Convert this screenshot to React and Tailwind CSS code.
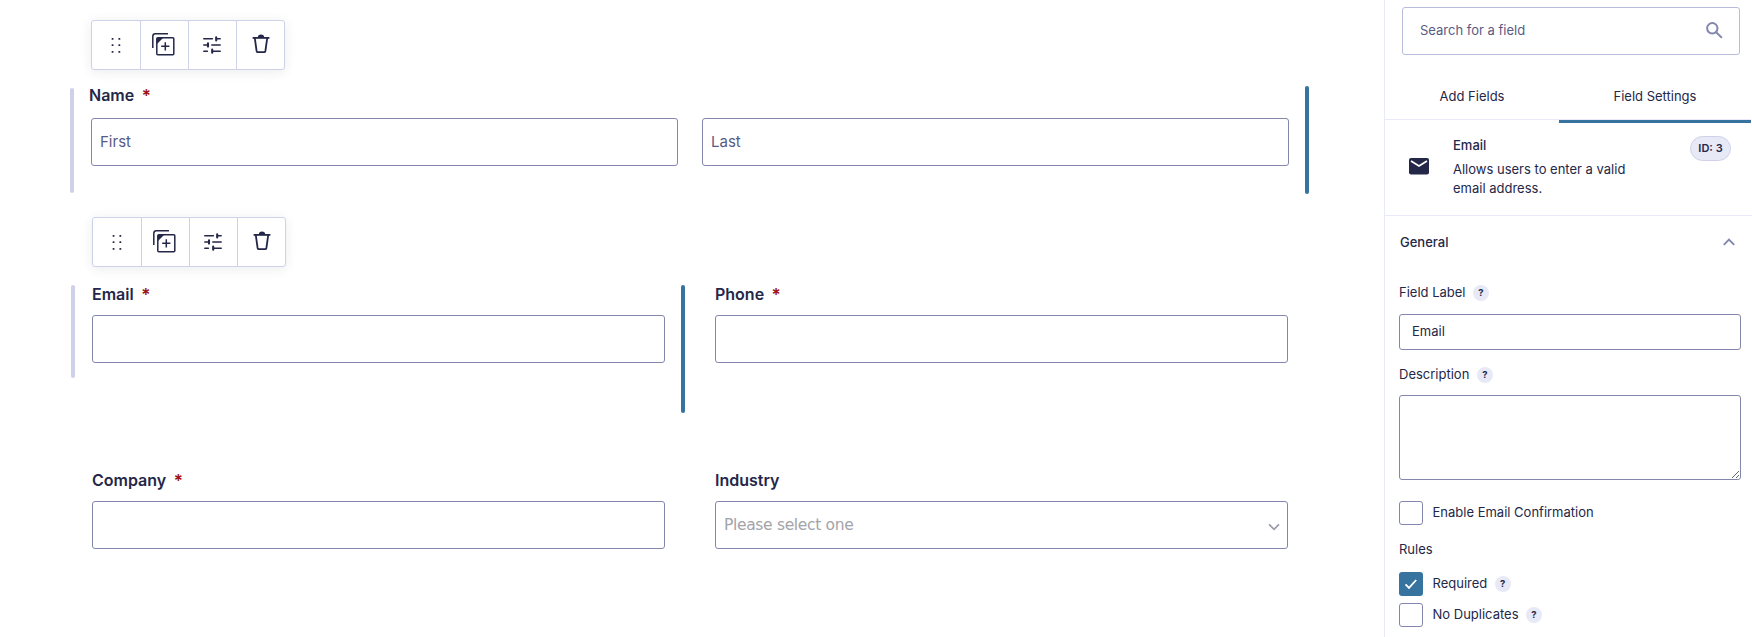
import React from "react";

const DragIcon = () => (
  <svg width="22" height="22" viewBox="0 0 22 22" fill="#242748">
    {[4.8, 11.2, 17.8].map((y) => (
      <React.Fragment key={y}>
        <rect x="6.6" y={y - 0.9} width="1.9" height="1.8" rx="0.5" />
        <rect x="13.4" y={y - 0.9} width="1.9" height="1.8" rx="0.5" />
      </React.Fragment>
    ))}
  </svg>
);

const DuplicateIcon = () => (
  <svg className="mr-[3px] mb-0.5" width="24" height="24" viewBox="0 0 24 24" fill="none" stroke="#242748" strokeWidth="1.5">
    <path d="M1.8 16V4.2a2.5 2.5 0 0 1 2.5-2.4H17" />
    <rect x="5.8" y="5.8" width="17" height="17" rx="1" />
    <path d="M6 6h6l-6 6z" fill="#242748" stroke="none" />
    <path d="M14.3 10.2v8.2M10.2 14.3h8.2" />
  </svg>
);

const SettingsIcon = () => (
  <svg className="mr-0.5 mb-px" width="18" height="20" viewBox="0 0 18 20" fill="none" stroke="#242748" strokeWidth="1.5" strokeLinecap="round">
    <path d="M.8 3.8h8.6M13.4 3.8h3.8M.8 10h3.4M8.8 10h8.4M.8 16.2h3.6M9.4 16.2h7.8" />
    <path d="M13.2 2.2v3.2M5 8.4v3.2M9.2 14.6v3.2" strokeWidth="2.1" />
  </svg>
);

const TrashIcon = () => (
  <svg className="mb-0.5" width="18" height="20" viewBox="0 0 18 20" fill="none" stroke="#242748" strokeWidth="1.8">
    <path d="M.6 3.9h16.8" />
    <path d="M5.8 3.4a3.2 3 0 0 1 6.4 0z" fill="#242748" stroke="none" />
    <path d="M2.8 4.2 4.6 17q.2 1.2 1.3 1.2h6.2q1.100 0 1.300-1.200L15.200 4.200" />
  </svg>
);

const SearchIcon = () => (
  <svg className="mb-px" width="17" height="17" viewBox="0 0 17 17" fill="none" stroke="#8387ad" strokeWidth="2">
    <circle cx="6.300" cy="6.300" r="5.200" />
    <path d="m10.200 10.200 5.700 5.700" />
  </svg>
);

const MailIcon = () => (
  <svg width="20" height="17" viewBox="0 0 20 17">
    <rect width="20" height="16.400" rx="2" fill="#242748" />
    <path d="m2 3 8 5 8-5" fill="none" stroke="#fff" strokeWidth="1.700" />
  </svg>
);

const Toolbar = () => (
  <div className="flex h-[50px] w-[194px] rounded-[3px] border border-[#cfd1e8] bg-white shadow-[0_2px_12px_rgba(36,39,72,0.09)]">
    <div className="flex w-[49px] items-center justify-center border-r border-[#cfd1e8]"><DragIcon /></div>
    <div className="flex w-12 items-center justify-center border-r border-[#cfd1e8]"><DuplicateIcon /></div>
    <div className="flex w-12 items-center justify-center border-r border-[#cfd1e8]"><SettingsIcon /></div>
    <div className="flex w-[47px] items-center justify-center"><TrashIcon /></div>
  </div>
);

const Label = ({ children, required }) => (
  <div className="flex h-5 items-center gap-[7.5px] text-base leading-5 font-semibold text-[#242748]">
    <span>{children}</span>
    {required && <span className="pt-px text-[17px] text-[#9c1111]">*</span>}
  </div>
);

const Box = ({ children }) => (
  <div className="flex h-12 w-full items-center rounded-[3px] border border-[#8387ad] bg-white px-2 text-[15px] text-[#585b83]">
    {children}
  </div>
);

const Help = () => (
  <span className="flex size-4 items-center justify-center rounded-full bg-[#e8e9f7] text-[9.5px] font-bold text-[#242748]">?</span>
);

const Check = ({ checked }) =>
  checked ? (
    <span className="flex size-6 items-center justify-center rounded-[3px] bg-[#36739e]">
      <svg width="14" height="12" viewBox="0 0 14 12" fill="none" stroke="#fff" strokeWidth="1.800">
        <path d="m1.500 6.400 3.500 3.500L12.200 2" />
      </svg>
    </span>
  ) : (
    <span className="size-6 rounded-[3px] border border-[#8387ad]" />
  );

function Editor() {
  return (
    <main className="flex w-[1384px] flex-col pt-5">
      <div className="pl-[91px]"><Toolbar /></div>

      <div className="mt-4 flex h-[108px] items-start pl-[70px]">
        <div className="mt-0.5 h-[105px] w-1 rounded-sm bg-[#cfd1e8]" />
        <div className="-mt-px ml-[15px] flex w-[1200px] flex-col">
          <Label required>Name</Label>
          <div className="mt-[13px] ml-0.5 flex gap-6">
            <div className="w-[587px]"><Box>First</Box></div>
            <div className="w-[587px]"><Box>Last</Box></div>
          </div>
        </div>
        <div className="ml-4 h-[108px] w-1 rounded-sm bg-[#36739e]" />
      </div>

      <div className="mt-[23px] pl-[92px]"><Toolbar /></div>

      <div className="mt-[18px] flex h-[128px] items-start pl-[71px]">
        <div className="h-[93px] w-1 rounded-sm bg-[#cfd1e8]" />
        <div className="-mt-px ml-[17px] flex w-[573px] flex-col gap-[11px]">
          <Label required>Email</Label>
          <Box />
        </div>
        <div className="ml-4 h-[128px] w-1 rounded-sm bg-[#36739e]" />
        <div className="-mt-px ml-[30px] flex w-[573px] flex-col gap-[11px]">
          <Label required>Phone</Label>
          <Box />
        </div>
      </div>

      <div className="mt-[57px] flex gap-[50px] pl-[92px]">
        <div className="flex w-[573px] flex-col gap-[11px]">
          <Label required>Company</Label>
          <Box />
        </div>
        <div className="flex w-[573px] flex-col gap-[11px]">
          <Label>Industry</Label>
          <Box>
            <span className="flex-1 pt-0.5 font-['DejaVu_Sans',sans-serif] text-[15.5px] tracking-[-0.33px] text-[#a3a4a8]">Please select one</span>
            <svg className="mt-[3px] -mr-px" width="12" height="8" viewBox="0 0 12 8" fill="none" stroke="#9a9cab" strokeWidth="1.700">
              <path d="m1 1.300 5 5 5-5" />
            </svg>
          </Box>
        </div>
      </div>
    </main>
  );
}

function Sidebar() {
  return (
    <aside className="flex w-[368px] flex-col border-l border-[#e8e9f9] text-[13px] text-[#242748]">
      <div className="mt-[7px] ml-[17px] flex h-12 w-[338px] items-center justify-between rounded-[3px] border border-[#b9bbdb] pr-4 pl-[17px] text-[#585b83]">
        <span>Search for a field</span>
        <SearchIcon />
      </div>

      <div className="mt-[17px] flex h-[51px]">
        <div className="flex h-12 w-[174px] items-center justify-center border-b border-[#e8e9f9] pt-0.5">Add Fields</div>
        <div className="flex h-[51px] w-48 flex-col border-b-[3px] border-[#36739e]">
          <div className="flex h-12 items-center justify-center border-b border-[#e8e9f9] pt-0.5">Field Settings</div>
        </div>
      </div>

      <div className="flex h-[93px] border-b border-[#e8e9f9] pl-6">
        <div className="w-11 pt-[35px]"><MailIcon /></div>
        <div className="w-[190px] pt-3">
          <div className="leading-5 font-medium">Email</div>
          <div className="mt-[5px] leading-[19px]">Allows users to enter a valid email address.</div>
        </div>
        <div className="mt-[13px] ml-[47px] flex h-[25px] w-[41px] items-center justify-center rounded-full border border-[#cfd1e8] bg-[#e8e9f7] text-[11px] font-semibold">
          ID: 3
        </div>
      </div>

      <div className="flex h-[52px] items-center justify-between pr-[17px] pl-[15px] font-medium">
        <span className="pt-0.5">General</span>
        <svg width="12" height="8" viewBox="0 0 12 8" fill="none" stroke="#8387ad" strokeWidth="1.900">
          <path d="m.800 6.900 5.200-5.200 5.200 5.200" />
        </svg>
      </div>

      <div className="flex flex-col pl-[14px]">
        <div className="mt-[15px] flex h-5 items-center gap-[7.5px]">Field Label <Help /></div>
        <div className="mt-[11px] flex h-9 w-[342px] items-center rounded-[3px] border border-[#8387ad] px-3 pb-px">Email</div>
        <div className="mt-[15px] flex h-5 items-center gap-[7.5px]">Description <Help /></div>
        <textarea className="mt-[10px] h-[85px] w-[342px] resize rounded-[3px] border border-[#8387ad] bg-white" />
        <div className="mt-[21px] flex h-6 items-center gap-[9.5px]"><Check />Enable Email Confirmation</div>
        <div className="mt-[14px] h-5 leading-5">Rules</div>
        <div className="mt-[13px] flex h-6 items-center gap-[9.5px]">
          <Check checked />
          <div className="flex items-center gap-[7.5px]">Required <Help /></div>
        </div>
        <div className="mt-[7px] flex h-6 items-center gap-[9.5px]">
          <Check />
          <div className="flex items-center gap-[7.5px]">No Duplicates <Help /></div>
        </div>
      </div>
    </aside>
  );
}

export default function App() {
  return (
    <div className="flex h-[637px] w-[1752px] overflow-hidden bg-white font-['Inter',sans-serif]">
      <Editor />
      <Sidebar />
    </div>
  );
}
